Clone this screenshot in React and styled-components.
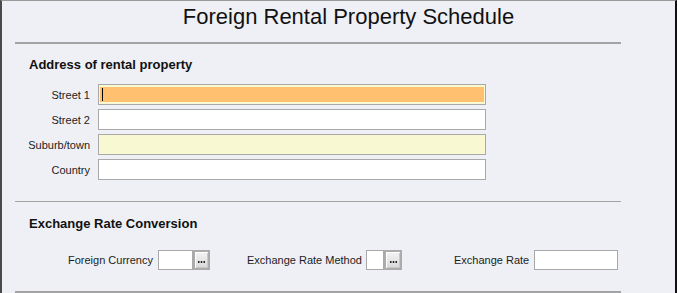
import React from "react";
import styled, { createGlobalStyle } from "styled-components";

const GlobalStyle = createGlobalStyle`
  html, body {
    margin: 0;
    padding: 0;
    background: #eef0f5;
  }
  body {
    font-family: "Liberation Sans", Arial, sans-serif;
  }
`;

const Frame = styled.div`
  width: 677px;
  height: 293px;
  box-sizing: border-box;
  background: #eef0f5;
  border-top: 1px solid #9a9a9a;
  border-left: 2px solid #4a4a4a;
  border-right: 2px solid #111;
  overflow: hidden;
  color: #1c1c1c;
`;

const Title = styled.h1`
  margin: 0;
  box-sizing: border-box;
  height: 41px;
  padding: 3px 0 0 20px;
  font-size: 22px;
  line-height: 26px;
  font-weight: normal;
  text-align: center;
  color: #111;
`;

const Section = styled.section`
  margin: 0 54px 0 13px;
  border-top: ${(p) => p.$rule}px solid #a3a3a3;
  padding: ${(p) => p.$top}px 0 21px;
`;

const SectionEnd = styled.div`
  margin: 0 54px 0 13px;
  border-top: 2px solid #a3a3a3;
`;

const Heading = styled.h2`
  margin: 0 0 0 14px;
  font-size: 13px;
  line-height: 16px;
  font-weight: bold;
  color: #111;
`;

const Rows = styled.div`
  display: flex;
  flex-direction: column;
  gap: 4px;
  margin-top: 11px;
  padding-left: 13px;
`;

const Row = styled.div`
  display: flex;
  align-items: center;
  gap: 8px;
  height: 21px;
`;

const Label = styled.label`
  width: ${(p) => p.$width}px;
  flex: none;
  text-align: right;
  font-size: 11px;
  white-space: nowrap;
  color: #1c1c1c;
`;

const Field = styled.div`
  position: relative;
  display: flex;
`;

const TextInput = styled.input`
  box-sizing: border-box;
  width: ${(p) => p.$width}px;
  height: ${(p) => p.$height || 21}px;
  margin: 0;
  padding: 2px 1px;
  border: 1px solid #a9a9a9;
  outline: none;
  font: 11px "Liberation Sans", Arial, sans-serif;
  background: ${(p) =>
    p.$tone === "focus"
      ? "linear-gradient(#ffc170, #ffc170) content-box, #f8f8d3 padding-box"
      : p.$tone === "required"
      ? "#f8f8d3"
      : "#fff"};
`;

const Caret = styled.span`
  position: absolute;
  left: 4px;
  top: 4px;
  width: 1px;
  height: 13px;
  background: #000;
`;

const LookupButton = styled.button`
  box-sizing: border-box;
  width: ${(p) => p.$width}px;
  height: 20px;
  margin: 0;
  padding: 0 0 5px;
  border: 2px solid #ababab;
  background: linear-gradient(#f4f4f4, #d8d8d8);
  box-shadow: inset 1px 1px #fff, inset -1px -1px #c8c8c8;
  display: flex;
  align-items: flex-end;
  justify-content: center;
`;

const ConvRow = styled.div`
  display: flex;
  align-items: center;
  margin-top: 18px;
  height: 20px;
`;

const Group = styled.div`
  display: flex;
  align-items: center;
  gap: ${(p) => p.$gap}px;
  margin-left: ${(p) => p.$offset}px;
`;

const Dots = () => (
  <svg width="7" height="2" viewBox="0 0 7 2">
    <rect x="0" y="0" width="1.5" height="2" fill="#222" />
    <rect x="2.75" y="0" width="1.5" height="2" fill="#222" />
    <rect x="5.5" y="0" width="1.5" height="2" fill="#222" />
  </svg>
);

const Lookup = ({ input, button }) => (
  <Field>
    <TextInput $width={input} $height={20} />
    <LookupButton $width={button} type="button">
      <Dots />
    </LookupButton>
  </Field>
);

const address = [
  { label: "Street 1", tone: "focus" },
  { label: "Street 2" },
  { label: "Suburb/town", tone: "required" },
  { label: "Country" },
];

const App = () => {
  return (
    <>
      <GlobalStyle />
      <Frame>
        <Title>Foreign Rental Property Schedule</Title>

        <Section $rule={2} $top={13}>
          <Heading>Address of rental property</Heading>
          <Rows>
            {address.map((row) => (
              <Row key={row.label}>
                <Label $width={62}>{row.label}</Label>
                <Field>
                  <TextInput $width={388} $tone={row.tone} />
                  {row.tone === "focus" && <Caret />}
                </Field>
              </Row>
            ))}
          </Rows>
        </Section>

        <Section $rule={1} $top={14}>
          <Heading>Exchange Rate Conversion</Heading>
          <ConvRow>
            <Group $gap={7} $offset={53}>
              <Label $width={83}>Foreign Currency</Label>
              <Lookup input={35} button={17} />
            </Group>
            <Group $gap={8} $offset={37}>
              <Label $width={111}>Exchange Rate Method</Label>
              <Lookup input={18} button={18} />
            </Group>
            <Group $gap={7} $offset={52}>
              <Label $width={73}>Exchange Rate</Label>
              <TextInput $width={84} $height={20} />
            </Group>
          </ConvRow>
        </Section>
        <SectionEnd />
      </Frame>
    </>
  );
};

export default App;
